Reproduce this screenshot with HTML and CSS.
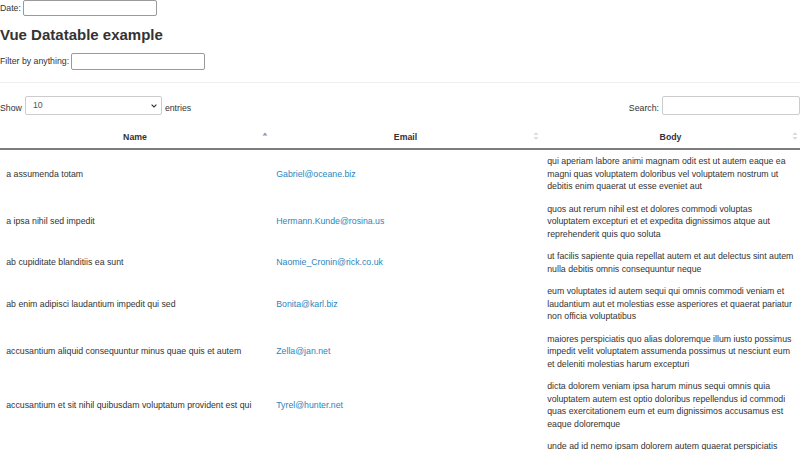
FILE: index.html
```html
<!DOCTYPE html>
<html>
<head>
<meta charset="utf-8">
<link rel="stylesheet" href="styles.css">
</head>
<body>
<div class="date-row">Date: <input class="plain-input" type="text"></div>
<h3 class="title">Vue Datatable example</h3>
<div class="filter-row">Filter by anything: <input class="plain-input" type="text"></div>
<hr class="sep">
<div class="dt-top">
  <label class="dt-length"><span class="lbl">Show</span> <select class="dt-select"><option>10</option></select> <span class="lbl">entries</span></label>
  <label class="dt-search"><span class="lbl">Search:</span> <input class="dt-input" type="search"></label>
</div>
<table class="dt">
  <colgroup><col class="c1"><col class="c2"><col class="c3"></colgroup>
  <thead>
    <tr>
      <th>Name<svg class="sort" width="6" height="10" viewBox="0 0 6 10"><path d="M0.5 4.5 L3 1.5 L5.5 4.5 Z" fill="#8f93c9"/></svg></th>
      <th>Email<svg class="sort" width="6" height="10" viewBox="0 0 6 10"><path d="M0.5 4 L3 1 L5.5 4 Z" fill="#dcdcdc"/><path d="M0.5 6 L3 9 L5.5 6 Z" fill="#dcdcdc"/></svg></th>
      <th>Body<svg class="sort" width="6" height="10" viewBox="0 0 6 10"><path d="M0.5 4 L3 1 L5.5 4 Z" fill="#dcdcdc"/><path d="M0.5 6 L3 9 L5.5 6 Z" fill="#dcdcdc"/></svg></th>
    </tr>
  </thead>
  <tbody>
    <tr><td>a assumenda totam</td><td><a href="#">Gabriel@oceane.biz</a></td><td>qui aperiam labore animi magnam odit est ut autem eaque ea magni quas voluptatem doloribus vel voluptatem nostrum ut debitis enim quaerat ut esse eveniet aut</td></tr>
    <tr><td>a ipsa nihil sed impedit</td><td><a href="#">Hermann.Kunde@rosina.us</a></td><td>quos aut rerum nihil est et dolores commodi voluptas voluptatem excepturi et et expedita dignissimos atque aut reprehenderit quis quo soluta</td></tr>
    <tr><td>ab cupiditate blanditiis ea sunt</td><td><a href="#">Naomie_Cronin@rick.co.uk</a></td><td>ut facilis sapiente quia repellat autem et aut delectus sint autem nulla debitis omnis consequuntur neque</td></tr>
    <tr><td>ab enim adipisci laudantium impedit qui sed</td><td><a href="#">Bonita@karl.biz</a></td><td>eum voluptates id autem sequi qui omnis commodi veniam et laudantium aut et molestias esse asperiores et quaerat pariatur non officia voluptatibus</td></tr>
    <tr><td>accusantium aliquid consequuntur minus quae quis et autem</td><td><a href="#">Zella@jan.net</a></td><td>maiores perspiciatis quo alias doloremque illum iusto possimus impedit velit voluptatem assumenda possimus ut nesciunt eum et deleniti molestias harum excepturi</td></tr>
    <tr><td>accusantium et sit nihil quibusdam voluptatum provident est qui</td><td><a href="#">Tyrel@hunter.net</a></td><td>dicta dolorem veniam ipsa harum minus sequi omnis quia voluptatem autem est optio doloribus repellendus id commodi quas exercitationem eum et eum dignissimos accusamus est eaque doloremque</td></tr>
    <tr><td>ad iusto omnis odit dolor voluptatibus</td><td><a href="#">Jennyfer@gerald.biz</a></td><td>unde ad id nemo ipsam dolorem autem quaerat perspiciatis exercitationem vel totam reiciendis dolor et natus ut cumque occaecati</td></tr>
  </tbody>
</table>
</body>
</html>
```
FILE: styles.css
```css
html, body {
  margin: 0;
  padding: 0;
  background: #fff;
}
body {
  font-family: "Liberation Sans", Arial, sans-serif;
  font-size: 8.75px;
  line-height: 12.5px;
  color: #333;
}
.date-row {
  display: flex;
  align-items: center;
  gap: 2px;
  height: 16px;
}
.plain-input {
  box-sizing: border-box;
  width: 134px;
  height: 16px;
  margin: 0;
  border: 1px solid #999;
  border-radius: 2px;
  padding: 0 2px;
  font: inherit;
}
.title {
  font-size: 15px;
  line-height: 16.5px;
  font-weight: bold;
  margin: 11px 0 0 0;
  color: #333;
}
.filter-row {
  display: flex;
  align-items: center;
  gap: 2px;
  margin-top: 9.5px;
  height: 17px;
}
.filter-row .plain-input {
  height: 17px;
}
.sep {
  margin: 12px 0 0 0;
  border: 0;
  border-top: 1px solid #eee;
}
.dt-top {
  display: flex;
  justify-content: space-between;
  align-items: center;
  margin-top: 13px;
  height: 19px;
}
.dt-length, .dt-search {
  display: flex;
  align-items: center;
  gap: 3px;
}
.lbl {
  padding-top: 5px;
}
.dt-select {
  box-sizing: border-box;
  width: 137px;
  height: 19px;
  margin: 0;
  border: 1px solid #ccc;
  border-radius: 2px;
  padding: 0 0 0 7px;
  background: #fff url("data:image/svg+xml;utf8,<svg xmlns='http://www.w3.org/2000/svg' width='6' height='4' viewBox='0 0 6 4'><path d='M0.6 0.6 L3 3 L5.4 0.6' fill='none' stroke='%23333' stroke-width='1.1'/></svg>") no-repeat right 4px center;
  -webkit-appearance: none;
  appearance: none;
  color: #555;
  font: inherit;
}
.dt-input {
  box-sizing: border-box;
  width: 138px;
  height: 19px;
  margin: 0;
  border: 1px solid #ccc;
  border-radius: 2px;
  font: inherit;
}
.dt {
  width: 800px;
  table-layout: fixed;
  border-collapse: collapse;
  margin-top: 8px;
}
.c1 { width: 270px; }
.c2 { width: 271px; }
.c3 { width: 259px; }
.dt th {
  position: relative;
  font-weight: bold;
  text-align: center;
  padding: 7.5px 6.25px 5px;
  border-bottom: 2px solid #7d7d7d;
}
.dt th .sort {
  position: absolute;
  right: 2px;
  top: 8px;
}
.dt td {
  padding: 5px 6.25px;
  vertical-align: middle;
  text-align: left;
}
.dt a {
  color: #2a86bd;
  text-decoration: none;
}
```
